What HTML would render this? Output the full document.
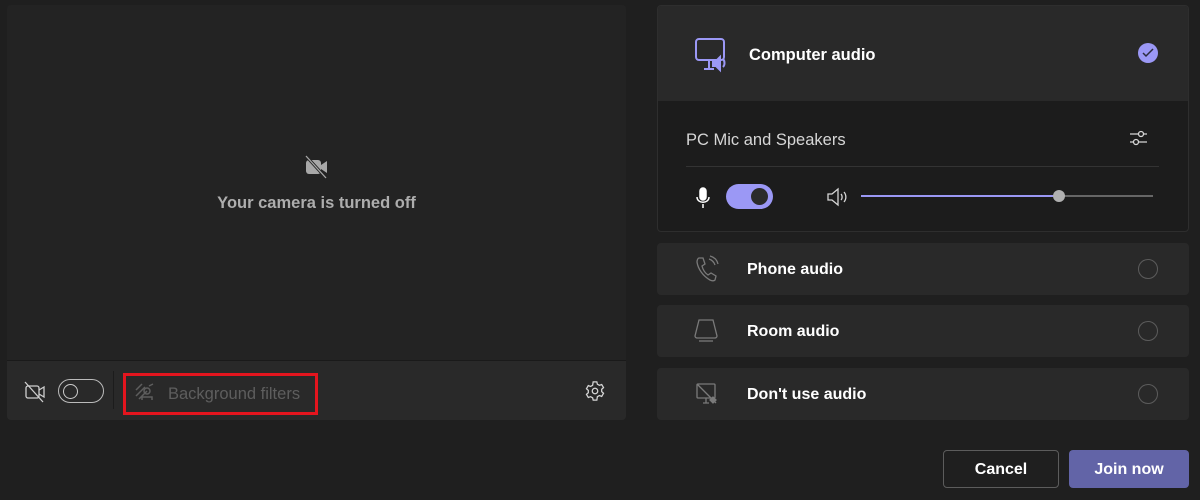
<!DOCTYPE html><html><head><style>
body{margin:0;width:1200px;height:500px;background:#1f1f1f;font-family:"Liberation Sans",sans-serif;position:relative;overflow:hidden;color:#fff}
.a{position:absolute}
.left{left:7px;top:5px;width:619px;height:415px;background:#262626;border-radius:4px;overflow:hidden}
.vid{left:0;top:0;width:619px;height:355px;background:#232323}
.bar{left:0;top:355px;width:619px;height:60px;background:#292929;border-top:1px solid #1a1a1a}
.card{background:#292929;border-radius:4px;left:657px;width:532px}
.opt{height:52px}
.opt .t{left:90px;top:18px;font-size:16px;font-weight:bold;color:#fff}
.radio{right:31px;width:18px;height:18px;border:1px solid #5c5c5c;border-radius:50%;top:16px}
.btn{top:450px;height:38px;border-radius:4px;font-size:16px;font-weight:bold;text-align:center;line-height:40px}
</style></head><body>
<div class="a left">
 <div class="a vid">
  <svg class="a" style="left:297px;top:150px" width="26" height="24" viewBox="0 0 26 24"><rect x="2" y="5" width="15" height="14" rx="3" fill="#a8a8a8"/><path d="M17 10l6-4v12l-6-4z" fill="#a8a8a8"/><path d="M2 1l20 22" stroke="#232323" stroke-width="3"/><path d="M2 1l20 22" stroke="#a8a8a8" stroke-width="1.3"/></svg>
  <div class="a" style="left:0;width:619px;text-align:center;top:189px;font-size:16.5px;font-weight:bold;color:#adadad">Your camera is turned off</div>
 </div>
 <div class="a bar">
  <svg class="a" style="left:17px;top:20px" width="22" height="22" viewBox="0 0 22 22" fill="none" stroke="#cfcfcf" stroke-width="1.3"><rect x="2" y="5" width="13" height="12" rx="2"/><path d="M15 9l5-3v10l-5-3"/><path d="M1 1l18 20"/></svg>
  <div class="a" style="left:51px;top:18px;width:44px;height:22px;border:1px solid #bbb;border-radius:12px"><div class="a" style="left:4px;top:4px;width:13px;height:13px;border:1px solid #ccc;border-radius:50%"></div></div>
  <div class="a" style="left:106px;top:10px;width:1px;height:38px;background:#1c1c1c"></div>
  <div class="a" style="left:116px;top:12px;width:195px;height:42px;border:3px solid #e3151e;box-sizing:border-box"></div>
  <svg class="a" style="left:128px;top:22px" width="20" height="18" viewBox="0 0 20 18" fill="none" stroke="#5e5e5e" stroke-width="1.5"><path d="M1 7l6-6M1 13l9-9M4 16l8-8M14 3l4-2"/><circle cx="12" cy="8" r="3"/><path d="M7 17v-3h10v3"/></svg>
  <div class="a" style="left:161px;top:24px;font-size:16.5px;color:#5e5e5e">Background filters</div>
  <svg class="a" style="left:577px;top:19px" width="22" height="22" viewBox="0 0 24 24" fill="none" stroke="#d6d6d6" stroke-width="1.4"><circle cx="12" cy="12" r="3"/><path d="M10 2h4l.6 2.6 2.2 1.2 2.5-.9 2 3.4-2 1.8v2.6l2 1.8-2 3.4-2.5-.9-2.2 1.2L14 22h-4l-.6-2.6-2.2-1.2-2.5.9-2-3.4 2-1.8v-2.6l-2-1.8 2-3.4 2.5.9 2.2-1.2z"/></svg>
 </div>
</div>

<div class="a card" style="top:5px;height:227px;background:#1c1c1c;border:1px solid #2e2e2e;box-sizing:border-box;overflow:hidden">
 <div class="a" style="left:0;top:0;width:532px;height:95px;background:#292929"></div>
 <svg class="a" style="left:36px;top:31px" width="34" height="36" viewBox="0 0 34 36" fill="none" stroke="#9b98f5" stroke-width="2"><rect x="2" y="2" width="28" height="21" rx="3"/><path d="M10 32h10M15 23v9"/><path d="M19 24h3l4-4v13l-4-4h-3z" fill="#9b98f5"/><path d="M29 22c2 2 2 6 0 8"/></svg>
 <div class="a" style="left:91px;top:40px;font-size:16.5px;font-weight:bold">Computer audio</div>
 <div class="a" style="left:480px;top:37px;width:20px;height:20px;border-radius:50%;background:#9b98f5"></div>
 <svg class="a" style="left:484px;top:42px" width="12" height="10"><path d="M1 5l3 3 7-7" stroke="#2b2b3d" stroke-width="1.5" fill="none"/></svg>
 <div class="a" style="left:28px;top:125px;font-size:16.5px;color:#d6d6d6">PC Mic and Speakers</div>
 <svg class="a" style="left:471px;top:122px" width="20" height="20" viewBox="0 0 20 20" fill="none" stroke="#d6d6d6" stroke-width="1.3"><path d="M1 6h17M1 14h17"/><circle cx="12" cy="6" r="2.5" fill="#1c1c1c"/><circle cx="7" cy="14" r="2.5" fill="#1c1c1c"/></svg>
 <div class="a" style="left:28px;top:160px;width:473px;height:1px;background:#333"></div>
 <svg class="a" style="left:38px;top:181px" width="14" height="22" viewBox="0 0 14 22" fill="none" stroke="#fff" stroke-width="1.5"><rect x="4" y="1" width="6" height="12" rx="3" fill="#fff"/><path d="M1 10c0 7 12 7 12 0M7 17v4"/></svg>
 <div class="a" style="left:68px;top:178px;width:47px;height:25px;border-radius:13px;background:#9b98f5"><div class="a" style="left:25px;top:4px;width:17px;height:17px;border-radius:50%;background:#2b2b2b"></div></div>
 <svg class="a" style="left:168px;top:180px" width="22" height="22" viewBox="0 0 22 22" fill="none" stroke="#d6d6d6" stroke-width="1.3"><path d="M2 8h4l6-5v16l-6-5H2z"/><path d="M15 8c1.5 1.5 1.5 4.5 0 6M18 6c2.5 3 2.5 7 0 10"/></svg>
 <div class="a" style="left:203px;top:189px;width:198px;height:2px;background:#9b98f5"></div>
 <div class="a" style="left:401px;top:189px;width:94px;height:2px;background:#666"></div>
 <div class="a" style="left:395px;top:184px;width:12px;height:12px;border-radius:50%;background:#b0b0b0"></div>
</div>

<div class="a card opt" style="top:243px">
 <svg class="a" style="left:37px;top:12px" width="26" height="30" viewBox="0 0 26 30" fill="none" stroke="#7a7a7a" stroke-width="1.3"><path d="M5 3l4 0 2 6-3 2c1 4 3 7 6 9l3-2 5 3-1 4c-1 1-3 1-5 0C9 21 4 14 3 7c0-2 1-4 2-4z"/><path d="M15 4c3 1 5 3 6 6M16 1c4 1 7 4 8 8"/></svg>
 <div class="a t">Phone audio</div><div class="a radio"></div>
</div>
<div class="a card opt" style="top:305px">
 <svg class="a" style="left:37px;top:14px" width="26" height="24" viewBox="0 0 26 24" fill="none" stroke="#7a7a7a" stroke-width="1.3"><path d="M5 1h14l4 16c0 1-1 2-2 2H3c-1 0-2-1-2-2z"/><path d="M5 22h14"/></svg>
 <div class="a t">Room audio</div><div class="a radio"></div>
</div>
<div class="a card opt" style="top:368px">
 <svg class="a" style="left:38px;top:14px" width="24" height="24" viewBox="0 0 24 24" fill="none" stroke="#7a7a7a" stroke-width="1.3"><rect x="2" y="2" width="18" height="14" rx="1"/><path d="M8 21h6M11 16v5M2 2l19 19"/><path d="M15 18l3-3 3 3-3 3z" fill="#7a7a7a"/></svg>
 <div class="a t">Don't use audio</div><div class="a radio"></div>
</div>

<div class="a btn" style="left:943px;width:116px;border:1px solid #5c5c5c;box-sizing:border-box;line-height:38px">Cancel</div>
<div class="a btn" style="left:1069px;width:120px;background:#6264a7">Join now</div>
</body></html>
